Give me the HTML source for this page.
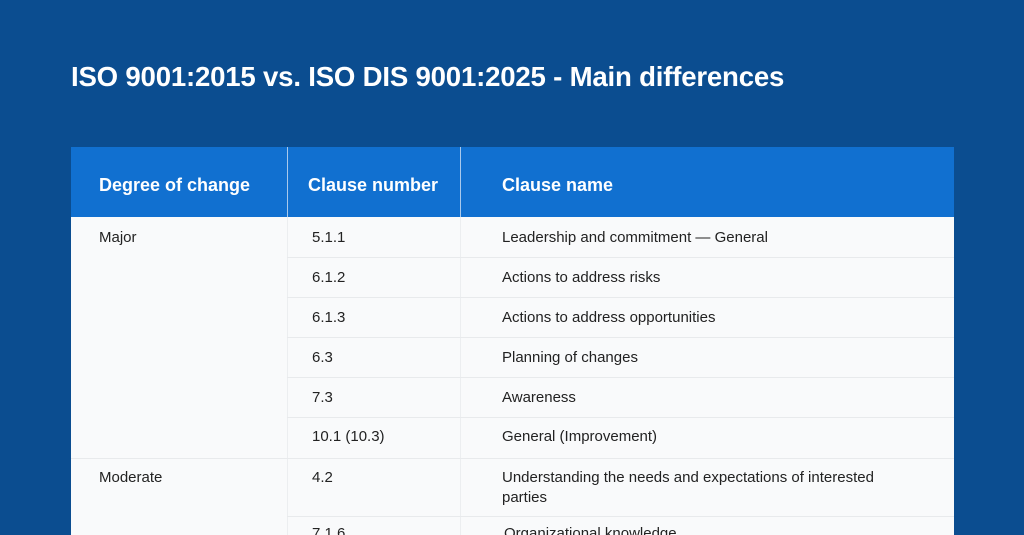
<!DOCTYPE html>
<html><head><style>
html,body{margin:0;width:1024px;height:535px;overflow:hidden}
body{background:#0b4d90;font-family:"Liberation Sans",Arial,sans-serif;position:relative}
h1{position:absolute;left:71px;top:61px;margin:0;color:#fff;font-size:27.6px;font-weight:bold;letter-spacing:-0.2px;white-space:nowrap}
.t{position:absolute;left:71px;top:147px;width:883px;height:388px;background:#f9fafb;overflow:hidden}
.hd{position:absolute;left:0;top:0;width:883px;height:70px;background:#1170d0}
.hd div{position:absolute;top:28px;color:#fff;font-weight:bold;font-size:18px}
.vl{position:absolute;top:0;width:1px;height:70px;background:#a9c9ec}
.vb{position:absolute;top:70px;width:1px;height:318px;background:#eceef0}
.r{position:absolute;left:216px;width:667px;height:1px;background:#e8eaec}
.c{position:absolute;font-size:15px;color:#222;line-height:20px;white-space:nowrap}
</style></head><body>
<h1>ISO 9001:2015 vs. ISO DIS 9001:2025 - Main differences</h1>
<div class="t">
<div class="hd">
<div style="left:28px">Degree of change</div>
<div style="left:237px">Clause number</div>
<div style="left:431px">Clause name</div>
</div>
<div class="vl" style="left:216px"></div><div class="vl" style="left:389px"></div>
<div class="vb" style="left:216px"></div><div class="vb" style="left:389px"></div>
<div class="r" style="top:110px"></div><div class="r" style="top:150px"></div>
<div class="r" style="top:190px"></div><div class="r" style="top:230px"></div>
<div class="r" style="top:270px"></div>
<div class="r" style="top:311px;left:0;width:883px"></div>
<div class="r" style="top:369px"></div>
<div class="c" style="left:28px;top:81px">Major</div>
<div class="c" style="left:241px;top:81px">5.1.1</div><div class="c" style="left:431px;top:81px">Leadership and commitment — General</div>
<div class="c" style="left:241px;top:121px">6.1.2</div><div class="c" style="left:431px;top:121px">Actions to address risks</div>
<div class="c" style="left:241px;top:161px">6.1.3</div><div class="c" style="left:431px;top:161px">Actions to address opportunities</div>
<div class="c" style="left:241px;top:201px">6.3</div><div class="c" style="left:431px;top:201px">Planning of changes</div>
<div class="c" style="left:241px;top:241px">7.3</div><div class="c" style="left:431px;top:241px">Awareness</div>
<div class="c" style="left:241px;top:280px">10.1 (10.3)</div><div class="c" style="left:431px;top:280px">General (Improvement)</div>
<div class="c" style="left:28px;top:321px">Moderate</div>
<div class="c" style="left:241px;top:321px">4.2</div><div class="c" style="left:431px;top:321px">Understanding the needs and expectations of interested<br>parties</div>
<div class="c" style="left:241px;top:377px">7.1.6</div><div class="c" style="left:433px;top:377px">Organizational knowledge</div>
</div>
</body></html>
